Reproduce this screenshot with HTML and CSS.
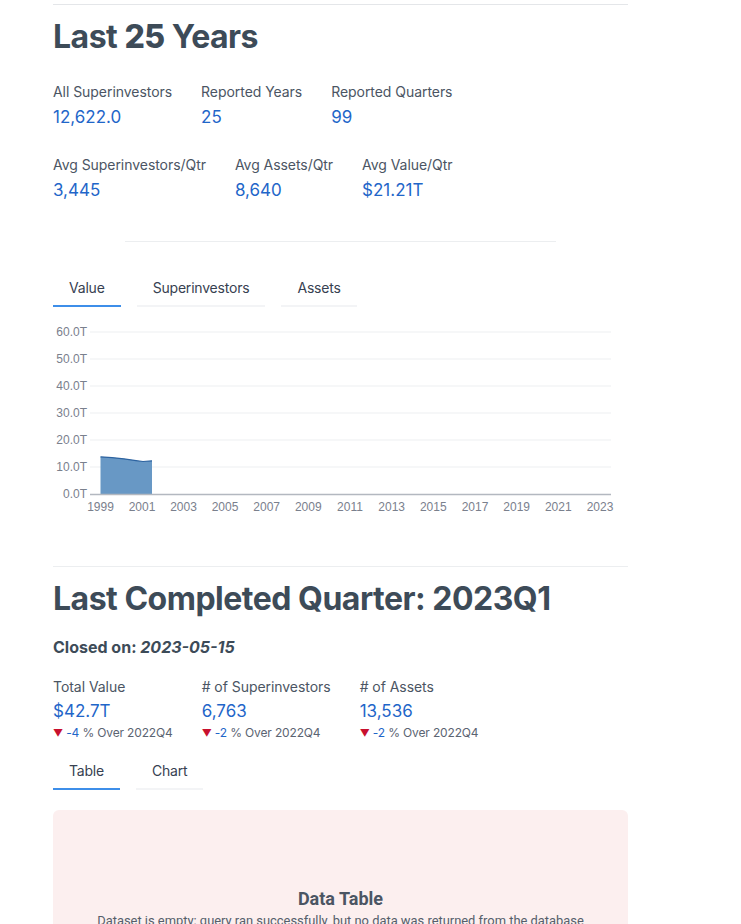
FILE: index.html
```html
<!DOCTYPE html>
<html>
<head>
<meta charset="utf-8">
<link rel="stylesheet" href="styles.css">
</head>
<body>
<main class="page">
  <hr class="rule rule-top">
  <h1 class="title">Last <span class="heavy">25</span> Years</h1>
  <div class="stats">
    <div class="stat"><div class="stat-label">All Superinvestors</div><div class="stat-value">12,622.0</div></div>
    <div class="stat"><div class="stat-label">Reported Years</div><div class="stat-value">25</div></div>
    <div class="stat"><div class="stat-label">Reported Quarters</div><div class="stat-value">99</div></div>
  </div>
  <div class="stats stats-second">
    <div class="stat"><div class="stat-label">Avg Superinvestors/Qtr</div><div class="stat-value">3,445</div></div>
    <div class="stat"><div class="stat-label">Avg Assets/Qtr</div><div class="stat-value">8,640</div></div>
    <div class="stat"><div class="stat-label">Avg Value/Qtr</div><div class="stat-value">$21.21T</div></div>
  </div>
  <hr class="rule rule-short">
  <div class="tabs tabs-first">
    <div class="tab active">Value</div>
    <div class="tab">Superinvestors</div>
    <div class="tab">Assets</div>
  </div>
  <svg class="chart" width="575" height="200" viewBox="53 320 575 200">
    <g class="grid">
      <line x1="90" y1="332" x2="611" y2="332"/>
      <line x1="90" y1="359" x2="611" y2="359"/>
      <line x1="90" y1="386" x2="611" y2="386"/>
      <line x1="90" y1="413" x2="611" y2="413"/>
      <line x1="90" y1="440" x2="611" y2="440"/>
      <line x1="90" y1="467" x2="611" y2="467"/>
    </g>
    <path class="area" d="M100.5,494 L100.5,456.8 L112,457.6 L124,458.8 L136,460.6 L143,461.5 L152,460.8 L152,494 Z"/>
    <path class="area-line" d="M100.5,456.8 L112,457.6 L124,458.8 L136,460.6 L143,461.5 L152,460.8"/>
    <line class="axis" x1="90" y1="494.5" x2="611" y2="494.5"/>
    <g class="ylabels">
      <text x="87" y="336">60.0T</text>
      <text x="87" y="363">50.0T</text>
      <text x="87" y="390">40.0T</text>
      <text x="87" y="417">30.0T</text>
      <text x="87" y="444">20.0T</text>
      <text x="87" y="471">10.0T</text>
      <text x="87" y="498">0.0T</text>
    </g>
    <g class="xlabels">
      <text x="100.5" y="510.5">1999</text>
      <text x="142" y="510.5">2001</text>
      <text x="183.5" y="510.5">2003</text>
      <text x="225" y="510.5">2005</text>
      <text x="266.7" y="510.5">2007</text>
      <text x="308.3" y="510.5">2009</text>
      <text x="350" y="510.5">2011</text>
      <text x="391.7" y="510.5">2013</text>
      <text x="433.3" y="510.5">2015</text>
      <text x="475" y="510.5">2017</text>
      <text x="516.7" y="510.5">2019</text>
      <text x="558.3" y="510.5">2021</text>
      <text x="600" y="510.5">2023</text>
    </g>
  </svg>
  <hr class="rule rule-section">
  <h1 class="title">Last Completed Quarter: 2023Q1</h1>
  <p class="closed">Closed on: <em>2023-05-15</em></p>
  <div class="stats stats-quarter">
    <div class="stat">
      <div class="stat-label">Total Value</div>
      <div class="stat-value">$42.7T</div>
      <div class="delta"><span class="down">▼</span> <span class="delta-num">-4</span> % Over 2022Q4</div>
    </div>
    <div class="stat">
      <div class="stat-label"># of Superinvestors</div>
      <div class="stat-value">6,763</div>
      <div class="delta"><span class="down">▼</span> <span class="delta-num">-2</span> % Over 2022Q4</div>
    </div>
    <div class="stat">
      <div class="stat-label"># of Assets</div>
      <div class="stat-value">13,536</div>
      <div class="delta"><span class="down">▼</span> <span class="delta-num">-2</span> % Over 2022Q4</div>
    </div>
  </div>
  <div class="tabs tabs-second">
    <div class="tab active">Table</div>
    <div class="tab">Chart</div>
  </div>
  <section class="empty">
    <h2 class="empty-title">Data Table</h2>
    <p class="empty-text">Dataset is empty: query ran successfully, but no data was returned from the database</p>
  </section>
</main>
</body>
</html>
```

FILE: styles.css
```css
html, body {
  margin: 0;
  padding: 0;
  background: #ffffff;
}
body {
  font-family: Inter, "Noto Sans", sans-serif;
  color: #3e4c59;
  overflow: hidden;
  height: 924px;
}
.page {
  width: 575px;
  margin-left: 53px;
  padding-top: 4px;
}
.rule {
  border: 0;
  height: 1px;
  margin: 0;
  background: #e6e8eb;
}
.rule-top {
  background: #e4e6e9;
}
.title {
  font-size: 32px;
  line-height: 40px;
  font-weight: 700;
  letter-spacing: -0.5px;
  color: #3d4b58;
  margin: 12px 0 0 0;
}
.heavy {
  font-weight: 800;
}
.stats {
  display: flex;
  gap: 29px;
  margin-top: 25px;
}
.stats-second {
  margin-top: 24px;
}
.stat-label {
  font-size: 14px;
  line-height: 20px;
  color: #4b5563;
  letter-spacing: -0.05px;
}
.stat-value {
  font-size: 17px;
  line-height: 28px;
  color: #1f66c9;
  margin-top: 1px;
}
.rule-short {
  width: 431px;
  margin: 37px auto 0 72px;
  background: #eceef0;
}
.tabs {
  display: flex;
  gap: 16px;
}
.tabs-first {
  margin-top: 28px;
}
.tab {
  font-size: 14px;
  line-height: 20px;
  letter-spacing: -0.2px;
  padding: 8px 16px 7px 16px;
  color: #374151;
  border-bottom: 2px solid #f3f4f6;
}
.tab.active {
  border-bottom-color: #3d8ee9;
}
.chart {
  display: block;
  margin-top: 13px;
  font-family: "Liberation Sans", Arial, sans-serif;
}
.grid line {
  stroke: #eef0f2;
  stroke-width: 1.2;
}
.axis {
  stroke: #b3b8c0;
  stroke-width: 1.5;
}
.area {
  fill: #6092c2;
  fill-opacity: 0.95;
}
.area-line {
  fill: none;
  stroke: #2d63a0;
  stroke-width: 1.2;
}
.ylabels text {
  font-size: 12px;
  fill: #7a808d;
  text-anchor: end;
}
.xlabels text {
  font-size: 12px;
  fill: #7a808d;
  text-anchor: middle;
}
.rule-section {
  margin-top: 46px;
  background: #eceef0;
}
.closed {
  font-size: 16px;
  line-height: 24px;
  font-weight: 700;
  color: #3d4b58;
  margin: 16px 0 0 0;
}
.closed em {
  font-style: italic;
}
.stats-quarter {
  margin-top: 18px;
}
.stats-quarter .stat-value {
  margin-top: 0;
}
.delta {
  font-size: 12px;
  line-height: 16px;
  color: #5b6472;
  letter-spacing: -0.15px;
}
.down {
  color: #c8102e;
  font-size: 10px;
}
.delta-num {
  color: #1f66c9;
}
.tabs-second {
  margin-top: 12px;
}
.empty {
  margin-top: 20px;
  background: #fcefef;
  border-radius: 6px;
  height: 200px;
  padding-top: 77px;
  box-sizing: border-box;
  text-align: center;
  font-family: Roboto, "Liberation Sans", sans-serif;
}
.empty-title {
  font-size: 18px;
  line-height: 24px;
  font-weight: 700;
  color: #4b5563;
  margin: 0;
}
.empty-text {
  font-size: 12.9px;
  line-height: 18px;
  color: #555e6b;
  margin: 1px 0 0 0;
}
```
